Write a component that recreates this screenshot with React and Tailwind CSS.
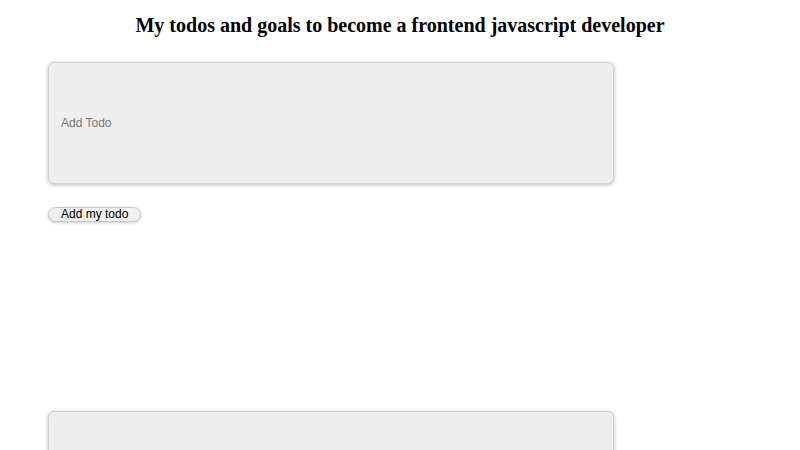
import React, { useState } from "react";

const App = () => {
    const [todo, setTodo] = useState("");

    return (
        <div className="min-h-screen bg-white" style={{ fontFamily: '"Liberation Sans", Arial, sans-serif' }}>
            <h1 className="pt-[13px] text-center text-[20px] font-bold text-black font-['Liberation_Serif',serif] leading-[24px]">
                My todos and goals to become a frontend javascript developer
            </h1>

            <div className="px-[48px] pt-[25px]">
                <input
                    type="text"
                    value={todo}
                    onChange={(e) => setTodo(e.target.value)}
                    placeholder="Add Todo"
                    className="block w-[566px] h-[122px] px-[12px] rounded-[6px] border border-[#cfcfcf] bg-[#eeeeee] text-[12px] text-black placeholder:text-[#777] shadow-[0_1px_4px_rgba(0,0,0,0.25)] outline-none"
                />

                <button className="mt-[23px] block h-[15px] px-[12px] rounded-full border border-[#c8c8c8] bg-[#efefef] text-[12px] leading-[13px] text-black shadow-[0_1px_3px_rgba(0,0,0,0.2)]">
                    Add my todo
                </button>

                <ul className="mt-[189px]">
                    <li className="w-[566px] h-[122px] rounded-[6px] border border-[#cfcfcf] bg-[#eeeeee] shadow-[0_1px_4px_rgba(0,0,0,0.25)]"></li>
                </ul>
            </div>
        </div>
    );
};

export default App;
